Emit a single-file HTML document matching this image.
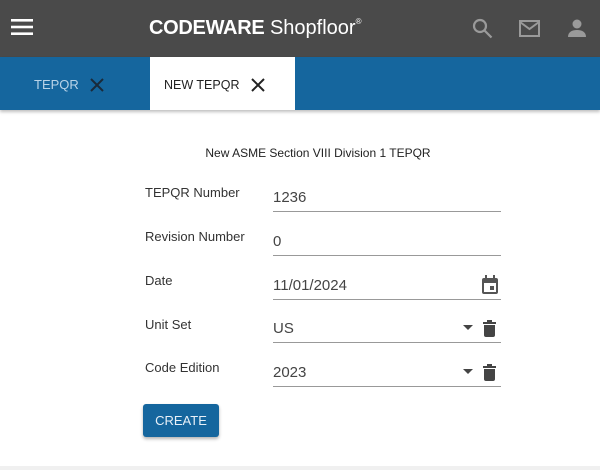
<!DOCTYPE html>
<html><head><style>
*{margin:0;padding:0;box-sizing:border-box}
body{width:600px;height:470px;background:#fff;font-family:"Liberation Sans",sans-serif;position:relative;overflow:hidden;color:#333}
.hdr{position:absolute;left:0;top:0;width:600px;height:57px;background:#4a4a4a}
.tabs{position:absolute;left:0;top:57px;width:600px;height:53px;background:#15669e;box-shadow:0 2px 3px rgba(0,0,0,.25)}
.tab{position:absolute;top:0;height:53px;font-size:13px;line-height:56px}
.lbl{position:absolute;left:145px;font-size:13px;color:#333}
.val{position:absolute;left:273px;font-size:15px;color:#444}
.line{position:absolute;left:273px;width:228px;height:1px;background:#999}
.ic{position:absolute}
</style></head><body>
<div class="hdr">
<svg class="ic" style="left:11px;top:18px" width="22" height="18"><rect y="1" width="22" height="2.6" fill="#fff"/><rect y="7.7" width="22" height="2.6" fill="#fff"/><rect y="14.4" width="22" height="2.6" fill="#fff"/></svg>
<div style="position:absolute;left:149px;top:17px;color:#fff;font-size:20px;white-space:nowrap"><b style="letter-spacing:-0.3px">CODEWARE</b> Shopfloor<span style="font-size:8px;vertical-align:top">®</span></div>
<svg class="ic" style="left:472px;top:18px" width="22" height="22" fill="none" stroke="#9a9a9a" stroke-width="2.2"><circle cx="8" cy="8" r="6"/><path d="M12.5 12.5l7 7"/></svg>
<svg class="ic" style="left:518px;top:19px" width="24" height="20" fill="none" stroke="#9a9a9a" stroke-width="2"><rect x="2" y="2" width="19" height="15"/><path d="M2 3l9.5 7 9.5-7"/></svg>
<svg class="ic" style="left:567px;top:18px" width="20" height="20" fill="#9a9a9a"><circle cx="10" cy="6" r="4.5"/><path d="M1 19c0-5 4-7 9-7s9 2 9 7z"/></svg>
</div>
<div class="tabs">
<div class="tab" style="left:34px;color:#b8d3e8">TEPQR</div>
<svg class="ic" style="left:90px;top:21px" width="14" height="14" stroke="#1a2a3a" stroke-width="2"><path d="M1 1l12 12M13 1L1 13"/></svg>
<div class="tab" style="left:150px;width:145px;background:#fff;color:#222;padding-left:14px;font-size:12.5px">NEW TEPQR</div>
<svg class="ic" style="left:251px;top:21px" width="14" height="14" stroke="#222" stroke-width="2"><path d="M1 1l12 12M13 1L1 13"/></svg>
</div>
<div style="position:absolute;left:0;width:600px;top:146px;text-align:center;font-size:12px;color:#222;padding-left:36px">New ASME Section VIII Division 1 TEPQR</div>
<div class="lbl" style="top:185px">TEPQR Number</div><div class="val" style="top:189px">1236</div><div class="line" style="top:211px"></div>
<div class="lbl" style="top:229px">Revision Number</div><div class="val" style="top:233px">0</div><div class="line" style="top:255px"></div>
<div class="lbl" style="top:273px">Date</div><div class="val" style="top:277px">11/01/2024</div><div class="line" style="top:299px"></div>
<svg class="ic" style="left:481px;top:275px" width="18" height="20" fill="#555"><path d="M3 3h12a2 2 0 0 1 2 2v12a2 2 0 0 1-2 2H3a2 2 0 0 1-2-2V5a2 2 0 0 1 2-2zm0 5v9h12V8z"/><rect x="4" y="0" width="2" height="4"/><rect x="12" y="0" width="2" height="4"/><rect x="9" y="11" width="4" height="4"/></svg>
<div class="lbl" style="top:317px">Unit Set</div><div class="val" style="top:320px">US</div><div class="line" style="top:342px"></div>
<svg class="ic" style="left:463px;top:325px" width="10" height="6" fill="#444"><path d="M0 0h10L5 5z"/></svg>
<svg class="ic" style="left:483px;top:320px" width="13" height="17" fill="#444"><rect x="0" y="2" width="13" height="2"/><rect x="4" y="0" width="5" height="2"/><path d="M1 5h11v10a2 2 0 0 1-2 2H3a2 2 0 0 1-2-2z"/></svg>
<div class="lbl" style="top:360px">Code Edition</div><div class="val" style="top:364px">2023</div><div class="line" style="top:386px"></div>
<svg class="ic" style="left:463px;top:369px" width="10" height="6" fill="#444"><path d="M0 0h10L5 5z"/></svg>
<svg class="ic" style="left:483px;top:364px" width="13" height="17" fill="#444"><rect x="0" y="2" width="13" height="2"/><rect x="4" y="0" width="5" height="2"/><path d="M1 5h11v10a2 2 0 0 1-2 2H3a2 2 0 0 1-2-2z"/></svg>
<div style="position:absolute;left:143px;top:404px;width:76px;height:33px;background:#15669e;border-radius:3px;box-shadow:0 2px 3px rgba(0,0,0,.3);color:#e8f0f8;font-size:13px;text-align:center;line-height:33px">CREATE</div>
<div style="position:absolute;left:0;top:466px;width:600px;height:4px;background:#f0f0f0"></div>
</body></html>
